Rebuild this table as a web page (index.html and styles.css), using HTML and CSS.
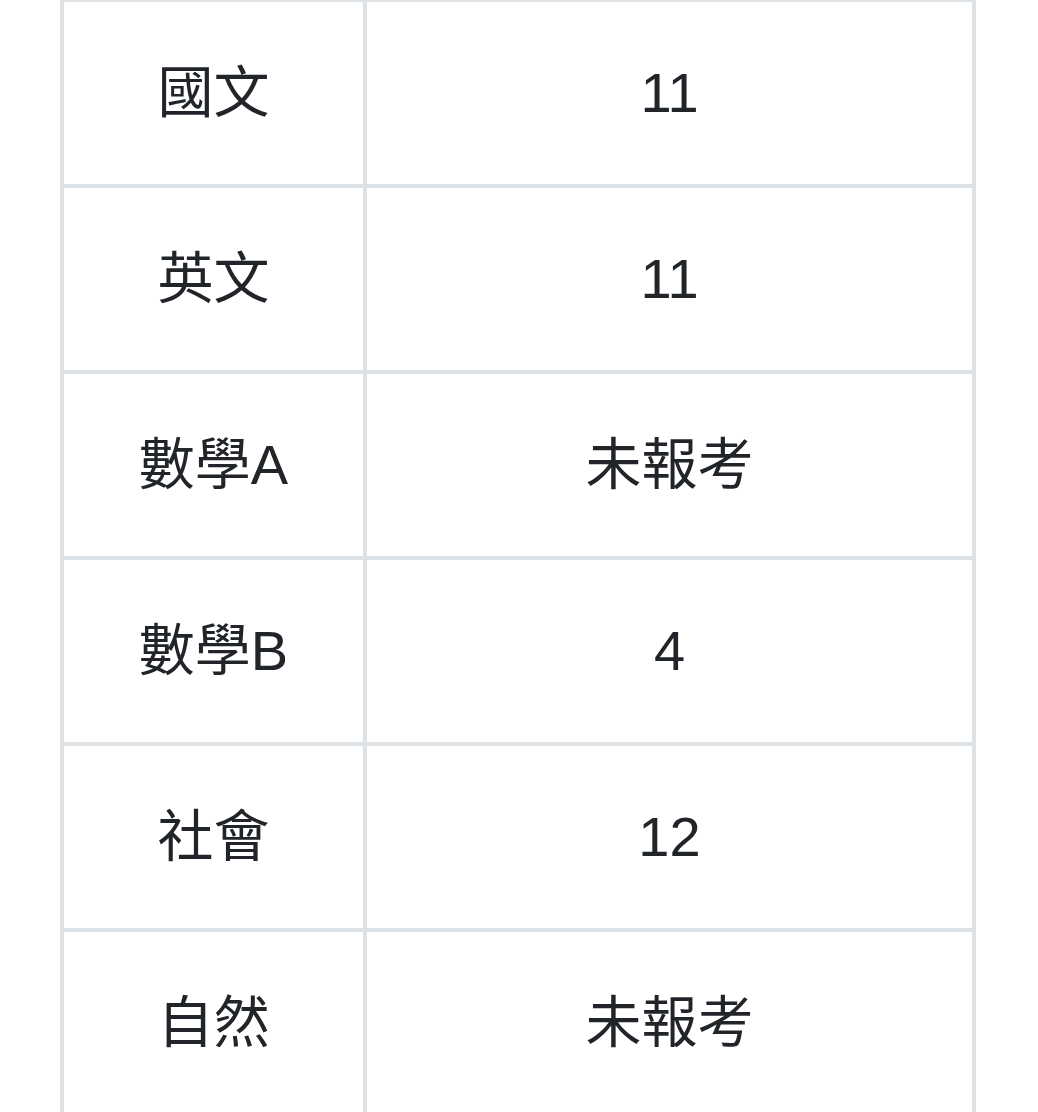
FILE: index.html
```html
<!DOCTYPE html>
<html lang="zh-Hant">
<head>
<meta charset="utf-8">
<link rel="stylesheet" href="styles.css">
</head>
<body>
<div class="wrap">
  <table class="scores">
    <colgroup><col class="c-subj"><col class="c-val"></colgroup>
    <tbody>
      <tr><td>國文</td><td>11</td></tr>
      <tr><td>英文</td><td>11</td></tr>
      <tr><td>數學A</td><td>未報考</td></tr>
      <tr><td>數學B</td><td>4</td></tr>
      <tr><td>社會</td><td>12</td></tr>
      <tr><td>自然</td><td>未報考</td></tr>
    </tbody>
  </table>
</div>
</body>
</html>
```

FILE: styles.css
```css
html, body {
  margin: 0;
  padding: 0;
  background: #ffffff;
}
.wrap {
  padding: 0 62px 0 60px;
  overflow: hidden;
  height: 1112px;
}
.scores {
  width: 100%;
  margin-top: -2px;
  border-collapse: collapse;
  font-family: "Liberation Sans", "Noto Sans CJK TC", sans-serif;
  font-size: 56px;
  color: #212529;
}
.c-subj { width: 303px; }
.scores td {
  border: 4px solid #dde2e6;
  height: 182px;
  padding: 0;
  text-align: center;
  vertical-align: middle;
  line-height: 1.2;
}
```
